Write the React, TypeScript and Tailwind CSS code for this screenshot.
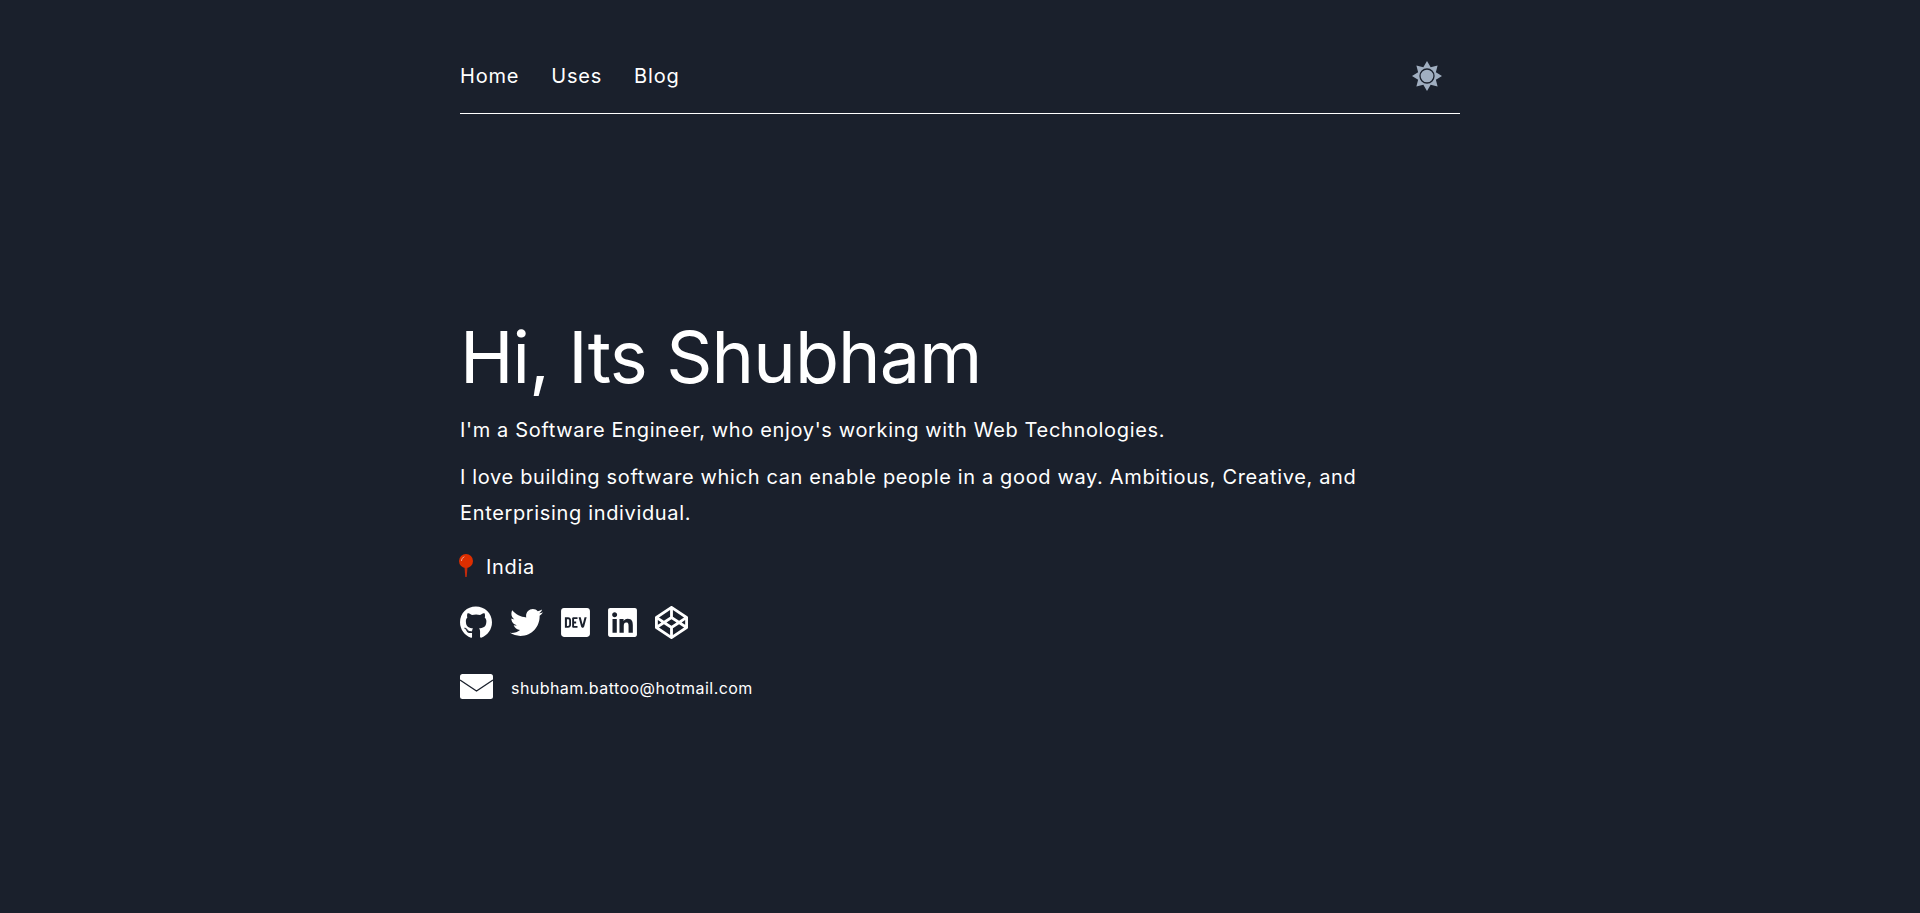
import { FaGithub, FaTwitter, FaDev, FaLinkedin, FaCodepen } from 'react-icons/fa'

const socials = [
  { label: 'GitHub', Icon: FaGithub, size: 'h-[33px] w-[32px]' },
  { label: 'Twitter', Icon: FaTwitter, size: 'h-[33px] w-[33px]' },
  { label: 'Dev', Icon: FaDev, size: 'h-[33px] w-[29px]' },
  { label: 'LinkedIn', Icon: FaLinkedin, size: 'h-[33px] w-[29px]' },
  { label: 'CodePen', Icon: FaCodepen, size: 'h-[33px] w-[33px]' },
]

function SunIcon() {
  // 8 pointed star with a dark ring in the middle
  const points: string[] = []
  for (let i = 0; i < 16; i++) {
    const r = i % 2 === 0 ? 15 : 9.6
    const a = (i * Math.PI) / 8 - Math.PI / 2
    points.push(`${15 + r * Math.cos(a)},${15 + r * Math.sin(a)}`)
  }
  return (
    <svg width="30" height="30" viewBox="0 0 30 30">
      <polygon points={points.join(' ')} fill="#a0aec0" />
      <circle cx="15" cy="15" r="7" fill="#a0aec0" stroke="#1a202c" strokeWidth="1.3" />
    </svg>
  )
}

function PinIcon() {
  return (
    <svg width="16" height="26" viewBox="0 0 16 26" className="-ml-[2px]">
      <path d="M6.4 12h3.2l-.9 11h-1.4z" fill="#c42a0c" />
      <circle cx="8" cy="7" r="7" fill="#dd2e00" />
      <path d="M3.4 7a4.6 4.6 0 0 1 3-4.3" fill="none" stroke="#f4a08a" strokeWidth="1" />
    </svg>
  )
}

function MailIcon() {
  return (
    <svg width="33" height="33" viewBox="0 0 33 33">
      <rect x="0" y="3" width="33" height="25" rx="2.5" fill="#fff" />
      <path d="M0 9l16.5 11L33 9" fill="none" stroke="#1a202c" strokeWidth="1.3" />
    </svg>
  )
}

export default function App() {
  return (
    <div className="min-h-[913px] bg-[#1a202c] text-white font-['Inter',sans-serif]">
      <div className="mx-auto w-[1000px]">
        <nav className="flex h-[114px] items-center justify-between border-b border-white pt-[38px]">
          <div className="flex gap-[32px] text-[20px] tracking-[0.8px]">
            <a>Home</a>
            <a>Uses</a>
            <a>Blog</a>
          </div>
          <div className="mr-[18px]">
            <SunIcon />
          </div>
        </nav>

        <main className="pt-[200px]">
          <h1 className="text-[72px] leading-[86px] tracking-[-0.9px]">Hi, Its Shubham</h1>
          <p className="mt-[12px] text-[20px] leading-[36px] tracking-[0.65px]">
            I'm a Software Engineer, who enjoy's working with Web Technologies.
          </p>
          <p className="mt-[11px] max-w-[920px] text-[20px] leading-[36px] tracking-[0.65px]">
            I love building software which can enable people in a good way. Ambitious, Creative, and Enterprising
            individual.
          </p>
          <div className="mt-[18px] flex items-center gap-[12px] text-[20px] leading-[36px] tracking-[0.65px]">
            <PinIcon />
            <span>India</span>
          </div>
          <div className="mt-[21px] flex items-center gap-[18px]">
            {socials.map(({ label, Icon, size }) => (
              <a key={label} aria-label={label}>
                <Icon className={size} />
              </a>
            ))}
          </div>
          <div className="mt-[32px] flex items-center gap-[18px]">
            <MailIcon />
            <span className="text-[16px] tracking-[0.45px]">shubham.battoo@hotmail.com</span>
          </div>
        </main>
      </div>
    </div>
  )
}
